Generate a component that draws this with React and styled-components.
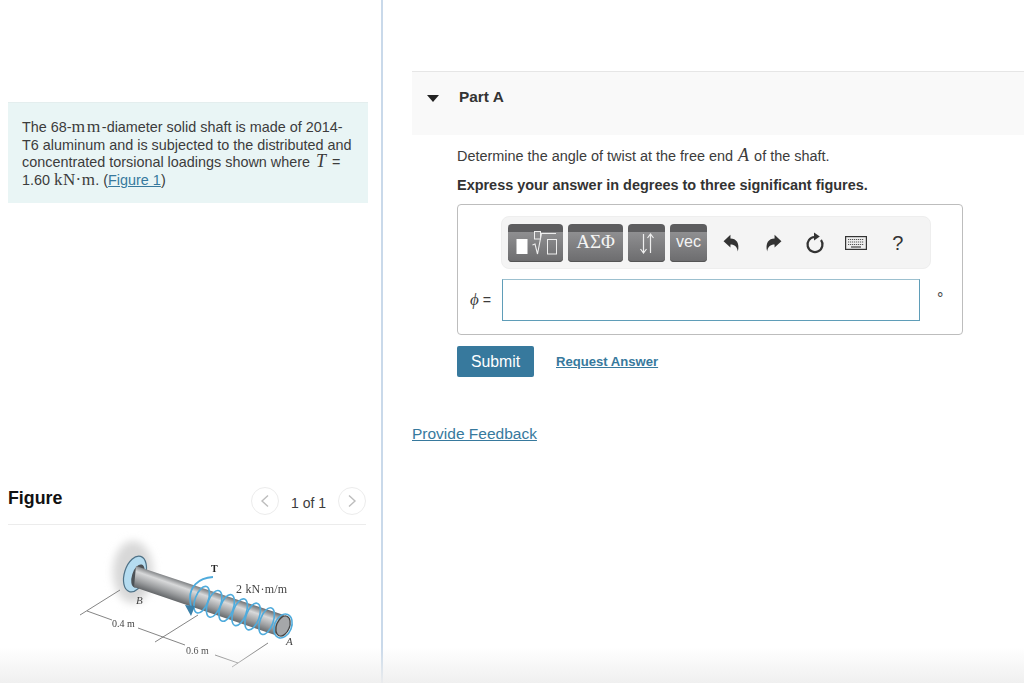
import React from 'react'
import styled, { createGlobalStyle } from 'styled-components'

const GlobalStyle = createGlobalStyle`
    html, body {
        margin: 0;
        padding: 0;
        background: #fff;
    }
    body {
        font-family: "Liberation Sans", Arial, sans-serif;
        color: #333;
    }
`

const Page = styled.div`
    position: relative;
    width: 1024px;
    height: 683px;
    overflow: hidden;
    display: grid;
    grid-template-columns: 381px 2px 1fr;
`

const BottomFade = styled.div`
    position: absolute;
    left: 0;
    right: 0;
    bottom: 0;
    height: 36px;
    background: linear-gradient(to bottom, rgba(238, 238, 238, 0), rgba(238, 238, 238, 0.9));
    pointer-events: none;
`

const LeftColumn = styled.div`
    padding: 102px 0 0 8px;
`

const Divider = styled.div`
    background: #c9d9ea;
`

const RightColumn = styled.div`
    padding: 71px 0 0 29px;
`

const Intro = styled.div`
    width: 360px;
    height: 101px;
    box-sizing: border-box;
    padding: 16px 0 0 14px;
    background: #e9f5f5;
    border-top: 1px solid #e4eeee;
    font-size: 14.4px;
    line-height: 17.7px;
    color: #3c3c3c;
    white-space: nowrap;
`

const Math = styled.span`
    font-family: "Liberation Serif", "Times New Roman", serif;
    font-size: ${(p) => p.size || 16}px;
    font-style: ${(p) => (p.italic ? 'italic' : 'normal')};
    letter-spacing: ${(p) => p.track || 0}px;
    margin: 0 ${(p) => p.gap || 0}px;
    line-height: 0;
`

const TextLink = styled.a`
    color: #37799d;
    text-decoration: underline;
`

const FigureHeader = styled.div`
    width: 358px;
    margin-top: 284px;
    height: 37px;
    border-bottom: 1px solid #ececec;
    display: flex;
    justify-content: space-between;
    align-items: flex-start;
`

const FigureTitle = styled.h2`
    margin: 0;
    font-size: 17.8px;
    line-height: 22px;
    font-weight: 700;
    color: #111;
`

const Pager = styled.div`
    display: flex;
    align-items: center;
    gap: 12px;
    font-size: 14px;
    color: #3c3c3c;
`

const PagerLabel = styled.span`
    margin-top: 3px;
`

const PagerButton = styled.span`
    width: 26px;
    height: 26px;
    border: 1px solid #ececec;
    border-radius: 50%;
    display: flex;
    align-items: center;
    justify-content: center;
`

const FigureDrawing = styled.svg`
    display: block;
    margin: 5px 0 0 62px;
    filter: blur(0.35px);
`

const PartHeader = styled.div`
    height: 64px;
    box-sizing: border-box;
    background: #f9f9f9;
    border-top: 1px solid #e6e6e6;
    display: flex;
    align-items: flex-start;
    padding: 15px 0 0 15px;
    gap: 20px;
`

const Caret = styled.span`
    margin-top: 8px;
    width: 0;
    height: 0;
    border-left: 6.5px solid transparent;
    border-right: 6.5px solid transparent;
    border-top: 7px solid #222;
`

const PartTitle = styled.h3`
    margin: 0;
    font-size: 15.4px;
    line-height: 20px;
    font-weight: 700;
    color: #333;
`

const PartBody = styled.div`
    padding: 12px 0 0 45px;
`

const Question = styled.p`
    margin: 0;
    font-size: 14.45px;
    line-height: 19px;
    color: #3c3c3c;
`

const Instruction = styled.p`
    margin: 10px 0 0;
    font-size: 14.45px;
    line-height: 19px;
    font-weight: 700;
    color: #333;
`

const AnswerBox = styled.div`
    width: 506px;
    height: 131px;
    box-sizing: border-box;
    margin-top: 9px;
    padding: 11px 0 0 43px;
    border: 1px solid #bdbdbd;
    border-radius: 4px;
`

const Toolbar = styled.div`
    width: 430px;
    height: 53px;
    box-sizing: border-box;
    padding: 7px 6px;
    background: #f4f4f4;
    border: 1px solid #eee;
    border-radius: 8px;
    display: flex;
    gap: 5px;
`

const ToolButton = styled.div`
    width: ${(p) => p.w}px;
    height: 38px;
    box-sizing: border-box;
    padding-top: 6px;
    border-radius: 4px;
    background: linear-gradient(to bottom, #5d5d5f 0, #5d5d5f 8px, #8f8f91 8px, #6c6c6e 100%);
    box-shadow: inset 0 -1px 0 #555;
    color: #f4f4f4;
    text-align: center;
    font-family: ${(p) => p.font || '"Liberation Sans", Arial, sans-serif'};
    font-size: ${(p) => p.fs || 16}px;
    line-height: 24px;
`

const ButtonDrawing = styled.svg`
    display: block;
    margin: -6px auto 0;
`

const ActionIcons = styled.div`
    display: flex;
    align-items: center;
    margin-left: -1px;
    height: 38px;
`

const ActionIcon = styled.span`
    width: 41.5px;
    display: flex;
    justify-content: center;
    color: #333;
    font-size: 20px;
`

const AnswerRow = styled.div`
    display: flex;
    align-items: center;
    margin-top: 10px;
    margin-left: -31px;
`

const AnswerLabel = styled.label`
    width: 32px;
    font-size: 14.3px;
    color: #3c3c3c;
    white-space: nowrap;
`

const AnswerInput = styled.div`
    width: 418px;
    height: 42px;
    box-sizing: border-box;
    border: 1px solid #5f9db8;
    border-top-color: #9cc0cf;
`

const Unit = styled.span`
    margin: -3px 0 0 17px;
    font-size: 16px;
    color: #444;
`

const Actions = styled.div`
    display: flex;
    align-items: center;
    gap: 22px;
    margin-top: 11px;
`

const SubmitButton = styled.button`
    width: 77px;
    height: 31px;
    border: none;
    border-radius: 2px;
    background: #37799d;
    color: #fff;
    font-family: inherit;
    font-size: 15.8px;
`

const RequestLink = styled(TextLink)`
    font-size: 13.1px;
    font-weight: 700;
`

const FeedbackLink = styled(TextLink)`
    display: block;
    margin-top: 47px;
    font-size: 15.5px;
    line-height: 20px;
`

const Chevron = ({ flip }) => (
    <svg width="10" height="14" viewBox="0 0 10 14" fill="none" stroke="#bdbdbd" strokeWidth="1.4">
        <path d={flip ? 'M2 1.5 L8 7 L2 12.5' : 'M8 1.5 L2 7 L8 12.5'} />
    </svg>
)

const ReplyArrow = ({ flip }) => (
    <svg width="17" height="18" viewBox="0 0 16 17" fill="#333" style={flip ? { transform: 'scaleX(-1)' } : undefined}>
        <path d="M0.5 6.8 L7 0.8 V4.2 C12.5 4.2 16 8.5 14 16.5 C13.4 12 11 9.8 7 9.8 V12.8 Z" />
    </svg>
)

const ResetIcon = () => (
    <svg width="20" height="22" viewBox="0 0 20 22" fill="none">
        <path d="M9.5 5 A7.5 7.5 0 1 0 16 8" stroke="#333" strokeWidth="2.2" />
        <path d="M9 0.6 L14.8 4.6 L9 8.6 Z" fill="#333" />
    </svg>
)

const KeyboardIcon = () => (
    <svg width="22" height="14" viewBox="0 0 22 14">
        <rect x="0.6" y="0.6" width="20.8" height="12.8" fill="#eee" stroke="#333" strokeWidth="1.2" />
        <path d="M3 3.5 H19 M3 6 H19 M3 8.5 H19" stroke="#555" strokeWidth="1.2" strokeDasharray="1.2 0.8" />
        <path d="M6 11 H16" stroke="#444" strokeWidth="1.2" />
    </svg>
)

const ShaftFigure = () => {
    const rings = [132, 144.5, 157, 170, 183, 197]
    const labelProps = { fontFamily: '"Liberation Serif", serif', fill: '#444' }
    return (
        <FigureDrawing width="240" height="153" viewBox="0 0 240 153">
            <defs>
                <filter id="wallBlur" x="-50%" y="-50%" width="200%" height="200%">
                    <feGaussianBlur stdDeviation="4" />
                </filter>
                <linearGradient id="shaftMetal" gradientUnits="userSpaceOnUse" x1="139" y1="59" x2="131" y2="82">
                    <stop offset="0" stopColor="#66696c" />
                    <stop offset="0.3" stopColor="#d8d9da" />
                    <stop offset="0.65" stopColor="#9b9d9f" />
                    <stop offset="1" stopColor="#55585b" />
                </linearGradient>
            </defs>

            <ellipse cx="63" cy="42" rx="20" ry="31" fill="#d8d8d8" filter="url(#wallBlur)" />

            <g stroke="#666" strokeWidth="0.8" fill="none">
                <path d="M10 85 L50 60" />
                <path d="M17 81 L42 90" />
                <path d="M68 98 L115 115" />
                <path d="M145 125 L168 133" />
                <path d="M85 112 L128 85" />
                <path d="M162 137 L198 113" />
            </g>

            <ellipse cx="65" cy="44" rx="10.5" ry="18.5" transform="rotate(18 65 44)" fill="#b5dcf0" stroke="#4f7287" strokeWidth="1.2" />
            <ellipse cx="68" cy="46" rx="6" ry="12" transform="rotate(18 68 46)" fill="#4d5256" />

            <path d="M66 36 L214 85 L205 105 L64 57 Z" fill="url(#shaftMetal)" />

            {rings.map((x) => {
                const y = 46 + (x - 63) * 0.33
                return (
                    <ellipse
                        key={x}
                        cx={x}
                        cy={y + 1}
                        rx="6.5"
                        ry="14"
                        transform={`rotate(20 ${x} ${y})`}
                        stroke="#4fabdc"
                        strokeWidth="1.6"
                        fill="none"
                    />
                )
            })}

            <ellipse cx="213" cy="96" rx="8.5" ry="12.5" transform="rotate(22 213 96)" fill="none" stroke="#4fabdc" strokeWidth="1.6" />
            <ellipse cx="213" cy="96" rx="6.5" ry="10.5" transform="rotate(22 213 96)" fill="#a5a7a9" stroke="#444" strokeWidth="1.3" />

            <path d="M143 47 C127 48 120 58 120 68 C120 73 121 77 122 80" stroke="#4fabdc" strokeWidth="1.8" fill="none" />
            <path d="M115 75 L125 76 L121 86 Z" fill="#3a7fa8" />

            <text x="141" y="42" fontSize="10" fontWeight="700" {...labelProps} fill="#222">T</text>
            <text x="166" y="63" fontSize="12" letterSpacing="0.2" {...labelProps}>2 kN·m/m</text>
            <text x="66" y="74" fontSize="11" fontStyle="italic" {...labelProps}>B</text>
            <text x="216" y="115" fontSize="11" fontStyle="italic" {...labelProps}>A</text>
            <text x="42" y="97" fontSize="10" {...labelProps}>0.4 m</text>
            <text x="116" y="124" fontSize="10" {...labelProps}>0.6 m</text>
        </FigureDrawing>
    )
}

function App() {
    return (
        <Page>
            <GlobalStyle />
            <LeftColumn>
                <Intro>
                    The 68-<Math size={17.5} track={1.5}>mm</Math>-diameter solid shaft is made of 2014-<br />
                    T6 aluminum and is subjected to the distributed and<br />
                    concentrated torsional loadings shown where <Math size={18} italic gap={2}>T</Math> =<br />
                    1.60 <Math size={17} track={0.4}>kN·m</Math>. (<TextLink>Figure 1</TextLink>)
                </Intro>
                <FigureHeader>
                    <FigureTitle>Figure</FigureTitle>
                    <Pager>
                        <PagerButton><Chevron /></PagerButton>
                        <PagerLabel>1 of 1</PagerLabel>
                        <PagerButton><Chevron flip /></PagerButton>
                    </Pager>
                </FigureHeader>
                <ShaftFigure />
            </LeftColumn>
            <Divider />
            <RightColumn>
                <PartHeader>
                    <Caret />
                    <PartTitle>Part A</PartTitle>
                </PartHeader>
                <PartBody>
                    <Question>
                        Determine the angle of twist at the free end <Math size={18} italic gap={1}>A</Math> of the shaft.
                    </Question>
                    <Instruction>Express your answer in degrees to three significant figures.</Instruction>
                    <AnswerBox>
                        <Toolbar>
                            <ToolButton w={55}>
                                <ButtonDrawing width="55" height="38" viewBox="0 0 55 38" fill="none">
                                    <rect x="8.5" y="15" width="11" height="15" fill="#fff" />
                                    <rect x="26.5" y="7.5" width="6" height="7.5" stroke="#eee" />
                                    <path d="M24.5 21 L27 20 L29.5 30 L33.5 9.5 H48" stroke="#eee" strokeWidth="1.1" />
                                    <rect x="39.5" y="15.5" width="9" height="14.5" stroke="#eee" />
                                </ButtonDrawing>
                            </ToolButton>
                            <ToolButton w={55} font='"Liberation Serif", serif' fs={19}>ΑΣΦ</ToolButton>
                            <ToolButton w={37}>
                                <ButtonDrawing width="16" height="38" viewBox="0 0 16 38" fill="none" stroke="#eee" strokeWidth="1.2">
                                    <path d="M4.5 10 V29 M1.5 25 L4.5 29 L7.5 25 M11.5 29 V10 M8.5 14 L11.5 10 L14.5 14" />
                                </ButtonDrawing>
                            </ToolButton>
                            <ToolButton w={37}>vec</ToolButton>
                            <ActionIcons>
                                <ActionIcon><ReplyArrow /></ActionIcon>
                                <ActionIcon><ReplyArrow flip /></ActionIcon>
                                <ActionIcon><ResetIcon /></ActionIcon>
                                <ActionIcon><KeyboardIcon /></ActionIcon>
                                <ActionIcon>?</ActionIcon>
                            </ActionIcons>
                        </Toolbar>
                        <AnswerRow>
                            <AnswerLabel><Math size={17} italic>ϕ</Math> =</AnswerLabel>
                            <AnswerInput />
                            <Unit>°</Unit>
                        </AnswerRow>
                    </AnswerBox>
                    <Actions>
                        <SubmitButton>Submit</SubmitButton>
                        <RequestLink>Request Answer</RequestLink>
                    </Actions>
                </PartBody>
                <FeedbackLink>Provide Feedback</FeedbackLink>
            </RightColumn>
            <BottomFade />
        </Page>
    )
}

export default App
